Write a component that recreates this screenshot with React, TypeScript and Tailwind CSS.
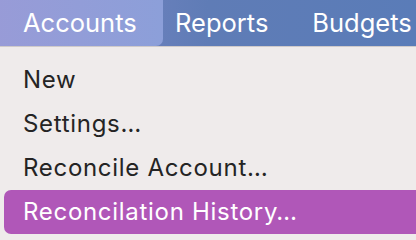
import React from "react";

export default function App() {
  const items = ["New", "Settings…", "Reconcile Account…"];
  return (
    <div
      className="w-[416px] h-[240px] overflow-hidden bg-[#efebeb] relative"
      style={{ fontFamily: "Inter, 'Liberation Sans', sans-serif" }}
    >
      <div className="h-[46px] flex items-stretch bg-gradient-to-r from-[#7f88c8] via-[#5f7cb6] to-[#5a7cb8] text-white text-[25.5px]">
        <div className="ml-[-5px] w-[168px] pl-[28px] pt-[1px] flex items-center rounded-br-[7px] bg-gradient-to-r from-[#989bd7] to-[#8c9fd9]">
          Accounts
        </div>
        <div className="pl-[12px] pt-[1px] flex items-center">Reports</div>
        <div className="pl-[44px] pt-[1px] flex items-center">Budgets</div>
      </div>
      <div className="h-px bg-[#cfcaca]" />
      <div className="pt-[11px] pl-[4px] text-[24px] tracking-[0.7px] text-[#242424]">
        {items.map((t) => (
          <div key={t} className="h-[44px] pl-[19px] flex items-center">
            {t}
          </div>
        ))}
        <div className="h-[44px] pl-[19px] flex items-center rounded-l-[7px] bg-[#b057b8] text-white">
          Reconcilation History…
        </div>
      </div>
    </div>
  );
}
